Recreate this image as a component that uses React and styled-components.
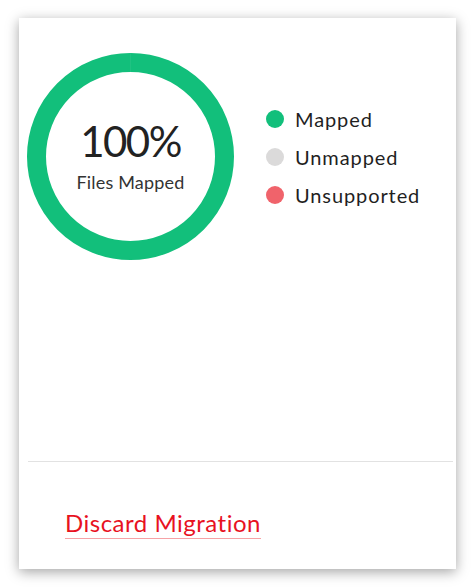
import styled, { createGlobalStyle } from 'styled-components';

const GlobalStyle = createGlobalStyle`
  html, body {
    margin: 0;
    padding: 0;
    background: #ffffff;
  }
  body {
    font-family: Lato, "Noto Sans", sans-serif;
  }
`;

const Page = styled.div`
  padding: 18px 19px;
`;

const Card = styled.div`
  width: 437px;
  height: 551px;
  background: #ffffff;
  box-shadow: 0 3px 12px rgba(0, 0, 0, 0.36);
  display: flex;
  flex-direction: column;
`;

const Summary = styled.div`
  flex: 1;
  display: flex;
  flex-direction: row;
  align-items: flex-start;
  padding: 35px 0 0 8px;
`;

const Donut = styled.div`
  position: relative;
  width: 207px;
  height: 207px;
`;

const DonutLabel = styled.div`
  position: absolute;
  inset: 0;
  display: flex;
  flex-direction: column;
  align-items: center;
  justify-content: center;
  color: #222;
`;

const Percent = styled.div`
  font-size: 42px;
  font-weight: 400;
  line-height: 1;
  letter-spacing: -1.5px;
  margin-top: 0;
`;

const Caption = styled.div`
  font-size: 18px;
  margin-top: 9px;
  letter-spacing: 0.2px;
  color: #333;
`;

const Legend = styled.ul`
  list-style: none;
  margin: 47px 0 0 32px;
  padding: 0;
`;

const LegendRow = styled.li`
  display: flex;
  align-items: center;
  height: 38px;
  font-size: 20px;
  letter-spacing: 0.9px;
  color: #1f1f1f;
`;

const Dot = styled.span`
  width: 18px;
  height: 18px;
  border-radius: 50%;
  background: ${(p) => p.color};
  margin-right: 11px;
`;

const Divider = styled.hr`
  border: none;
  border-top: 1px solid #e2e2e2;
  margin: 0 3px 0 9px;
`;

const Footer = styled.div`
  height: 107px;
  padding: 46px 0 0 46px;
  box-sizing: border-box;
`;

const DiscardLink = styled.a`
  font-size: 24px;
  letter-spacing: 0.5px;
  color: #e8121f;
  text-decoration: none;
  border-bottom: 1px solid #f6a2a6;
  padding-bottom: 1px;
  cursor: pointer;
`;

const legendItems = [
  { label: 'Mapped', color: '#12bf7b' },
  { label: 'Unmapped', color: '#dbdada' },
  { label: 'Unsupported', color: '#f0636b' },
];

function App() {
  const r = 94;
  const c = 2 * Math.PI * r;
  return (
    <Page>
      <GlobalStyle />
      <Card>
        <Summary>
          <Donut>
            <svg width="207" height="207" viewBox="0 0 207 207">
              <circle
                cx="103.5"
                cy="103.5"
                r={r}
                fill="none"
                stroke="#12bf7b"
                strokeWidth="19"
                strokeDasharray={`${c - 1} 1`}
                transform="rotate(-90 103.5 103.5)"
              />
            </svg>
            <DonutLabel>
              <Percent>100%</Percent>
              <Caption>Files Mapped</Caption>
            </DonutLabel>
          </Donut>
          <Legend>
            {legendItems.map((item) => (
              <LegendRow key={item.label}>
                <Dot color={item.color} />
                {item.label}
              </LegendRow>
            ))}
          </Legend>
        </Summary>
        <Divider />
        <Footer>
          <DiscardLink>Discard Migration</DiscardLink>
        </Footer>
      </Card>
    </Page>
  );
}

export default App;
